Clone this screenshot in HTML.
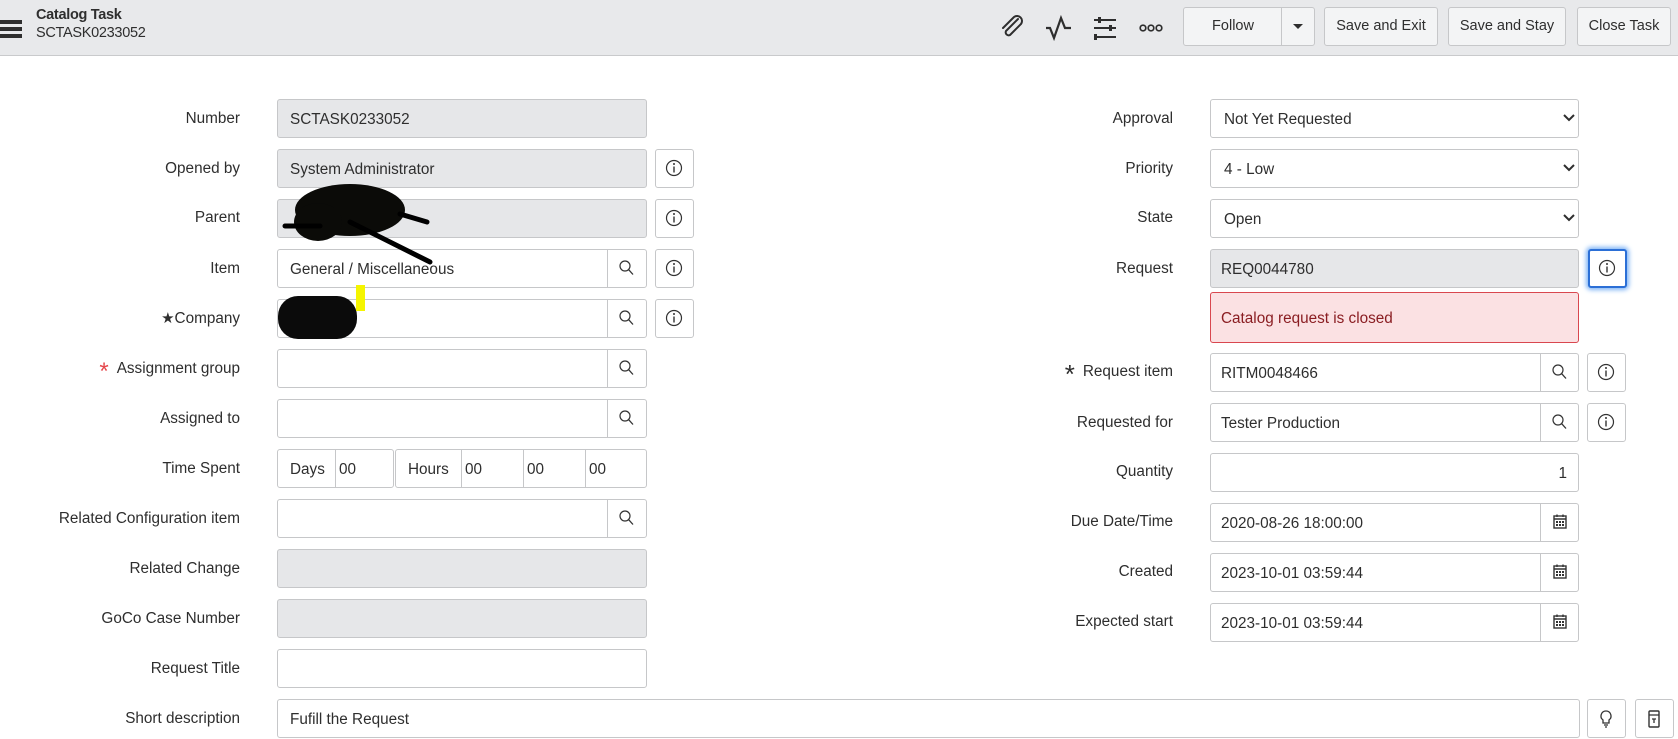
<!DOCTYPE html>
<html><head><meta charset="utf-8">
<style>
*{box-sizing:border-box}
body{margin:0;width:1678px;height:736px;overflow:hidden;background:#fff;font-family:"Liberation Sans",sans-serif;font-size:15.3px;color:#2e2e2e;position:relative}
.hdr{position:absolute;left:0;top:0;width:1678px;height:56px;background:#e8e9eb;border-bottom:1px solid #c9cacc}
.a{position:absolute}
.lbl{position:absolute;text-align:right;line-height:20px;color:#2e2e2e;white-space:nowrap}
.in{position:absolute;height:39px;border:1px solid #c6c7c9;border-radius:3px;background:#fff;line-height:39px;padding-left:12px;white-space:nowrap}
.ro{background:#e6e7e9}
.btn{position:absolute;height:39px;width:39px;border:1px solid #c6c7c9;border-radius:3px;background:#fff}
.hb{position:absolute;top:7px;height:39px;border:1px solid #c6c7c9;border-radius:3px;background:#f3f4f5;line-height:37px;text-align:center;font-size:14.5px;color:#2e2e2e}
.sep{position:absolute;top:0;bottom:0;width:1px;background:#c6c7c9}
svg{position:absolute}
</style></head><body>
<div class="hdr"></div>
<div class="a" style="left:0;top:20px;width:22px;height:4px;background:#2e2e2e"></div>
<div class="a" style="left:0;top:27px;width:22px;height:4px;background:#2e2e2e"></div>
<div class="a" style="left:0;top:34px;width:22px;height:4px;background:#2e2e2e"></div>
<div class="a" style="left:36px;top:7px;font-weight:bold;font-size:14.5px;letter-spacing:-0.3px">Catalog Task</div>
<div class="a" style="left:36px;top:25px;font-size:14.5px;letter-spacing:-0.3px">SCTASK0233052</div>

<svg style="left:998px;top:13px" width="28" height="28" viewBox="0 0 28 28"><path d="M20 6 L8 18 a3 3 0 0 0 4 4 L23 11 a5 5 0 0 0 -7 -7 L5 15" fill="none" stroke="#2e2e2e" stroke-width="2" stroke-linecap="round"/></svg>
<svg style="left:1045px;top:14px" width="28" height="28" viewBox="0 0 28 28"><path d="M1 14 L5 14 L9 24 L16 4 L20 14 L26 14" fill="none" stroke="#2e2e2e" stroke-width="2.2"/></svg>
<svg style="left:1092px;top:15px" width="28" height="28" viewBox="0 0 28 28"><path d="M2 5H24M2 13H24M2 22H24" stroke="#2e2e2e" stroke-width="2"/><rect x="6" y="2" width="3" height="6" fill="#2e2e2e"/><rect x="17" y="10" width="3" height="6" fill="#2e2e2e"/><rect x="2" y="19" width="3" height="6" fill="#2e2e2e"/></svg>
<svg style="left:1138px;top:22px" width="28" height="12" viewBox="0 0 28 12"><circle cx="5" cy="6" r="2.8" fill="none" stroke="#2e2e2e" stroke-width="1.7"/><circle cx="13" cy="6" r="2.8" fill="none" stroke="#2e2e2e" stroke-width="1.7"/><circle cx="21" cy="6" r="2.8" fill="none" stroke="#2e2e2e" stroke-width="1.7"/></svg>

<div class="hb" style="left:1183px;width:132px;"><span style="position:absolute;left:0;width:98px">Follow</span><div class="sep" style="left:97px"></div><svg style="left:108px;top:15px" width="12" height="8"><path d="M1 1L6 6L11 1Z" fill="#2e2e2e"/></svg></div>
<div class="hb" style="left:1324px;width:114px">Save and Exit</div>
<div class="hb" style="left:1448px;width:118px">Save and Stay</div>
<div class="hb" style="left:1577px;width:94px">Close Task</div>

<div class="lbl" style="right:1438px;top:109px">Number</div>
<div class="lbl" style="right:1438px;top:159px">Opened by</div>
<div class="lbl" style="right:1438px;top:208px">Parent</div>
<div class="lbl" style="right:1438px;top:259px">Item</div>
<div class="lbl" style="right:1438px;top:309px"><span style="font-size:15px">★</span>Company</div>
<div class="lbl" style="right:1438px;top:359px"><span style="color:#e5484d;font-size:24px;vertical-align:-6px;margin-right:8px">*</span>Assignment group</div>
<div class="lbl" style="right:1438px;top:409px">Assigned to</div>
<div class="lbl" style="right:1438px;top:459px">Time Spent</div>
<div class="lbl" style="right:1438px;top:509px">Related Configuration item</div>
<div class="lbl" style="right:1438px;top:559px">Related Change</div>
<div class="lbl" style="right:1438px;top:609px">GoCo Case Number</div>
<div class="lbl" style="right:1438px;top:659px">Request Title</div>
<div class="lbl" style="right:1438px;top:709px">Short description</div>

<div class="in ro" style="left:277px;top:99px;width:370px">SCTASK0233052</div>
<div class="in ro" style="left:277px;top:149px;width:370px">System Administrator</div>
<div class="in ro" style="left:277px;top:199px;width:370px"></div>
<div class="in" style="left:277px;top:249px;width:370px">General / Miscellaneous</div>
<div class="in" style="left:277px;top:299px;width:370px"></div>
<div class="in" style="left:277px;top:349px;width:370px"></div>
<div class="in" style="left:277px;top:399px;width:370px"></div>
<div class="in" style="left:277px;top:449px;width:117px;padding-left:12px">Days<div class="sep" style="left:57px"></div><span style="position:absolute;left:61px">00</span></div>
<div class="in" style="left:395px;top:449px;width:252px;padding-left:12px">Hours<div class="sep" style="left:65px"></div><span style="position:absolute;left:69px">00</span><div class="sep" style="left:127px"></div><span style="position:absolute;left:131px">00</span><div class="sep" style="left:189px"></div><span style="position:absolute;left:193px">00</span></div>
<div class="in" style="left:277px;top:499px;width:370px"></div>
<div class="in ro" style="left:277px;top:549px;width:370px"></div>
<div class="in ro" style="left:277px;top:599px;width:370px"></div>
<div class="in" style="left:277px;top:649px;width:370px"></div>
<div class="in" style="left:277px;top:699px;width:1303px">Fufill the Request</div>

<div class="a" style="left:607px;top:249px;width:1px;height:39px;background:#c6c7c9"></div>
<div class="a" style="left:607px;top:299px;width:1px;height:39px;background:#c6c7c9"></div>
<div class="a" style="left:607px;top:349px;width:1px;height:39px;background:#c6c7c9"></div>
<div class="a" style="left:607px;top:399px;width:1px;height:39px;background:#c6c7c9"></div>
<div class="a" style="left:607px;top:499px;width:1px;height:39px;background:#c6c7c9"></div>

<div class="btn" style="left:655px;top:149px"></div>
<div class="btn" style="left:655px;top:199px"></div>
<div class="btn" style="left:655px;top:249px"></div>
<div class="btn" style="left:655px;top:299px"></div>

<div class="lbl" style="right:505px;top:109px">Approval</div>
<div class="lbl" style="right:505px;top:159px">Priority</div>
<div class="lbl" style="right:505px;top:208px">State</div>
<div class="lbl" style="right:505px;top:259px">Request</div>
<div class="lbl" style="right:505px;top:362px"><span style="font-size:26px;vertical-align:-7px;margin-right:8px">*</span>Request item</div>
<div class="lbl" style="right:505px;top:413px">Requested for</div>
<div class="lbl" style="right:505px;top:462px">Quantity</div>
<div class="lbl" style="right:505px;top:512px">Due Date/Time</div>
<div class="lbl" style="right:505px;top:562px">Created</div>
<div class="lbl" style="right:505px;top:612px">Expected start</div>

<div class="in" style="left:1210px;top:99px;width:369px;padding-left:13px">Not Yet Requested</div>
<div class="in" style="left:1210px;top:149px;width:369px;padding-left:13px">4 - Low</div>
<div class="in" style="left:1210px;top:199px;width:369px;padding-left:13px">Open</div>
<div class="in ro" style="left:1210px;top:249px;width:369px;padding-left:10px">REQ0044780</div>
<div class="in" style="left:1210px;top:292px;width:369px;height:51px;line-height:51px;background:#fbe1e3;border-color:#d9474f;color:#8a1d22;padding-left:10px">Catalog request is closed</div>
<div class="in" style="left:1210px;top:353px;width:369px;padding-left:10px">RITM0048466</div>
<div class="in" style="left:1210px;top:403px;width:369px;padding-left:10px">Tester Production</div>
<div class="in" style="left:1210px;top:453px;width:369px;text-align:right;padding-right:11px">1</div>
<div class="in" style="left:1210px;top:503px;width:369px;padding-left:10px">2020-08-26 18:00:00</div>
<div class="in" style="left:1210px;top:553px;width:369px;padding-left:10px">2023-10-01 03:59:44</div>
<div class="in" style="left:1210px;top:603px;width:369px;padding-left:10px">2023-10-01 03:59:44</div>
<div class="a" style="left:1540px;top:353px;width:1px;height:39px;background:#c6c7c9"></div>
<div class="a" style="left:1540px;top:403px;width:1px;height:39px;background:#c6c7c9"></div>
<div class="a" style="left:1540px;top:503px;width:1px;height:39px;background:#c6c7c9"></div>
<div class="a" style="left:1540px;top:553px;width:1px;height:39px;background:#c6c7c9"></div>
<div class="a" style="left:1540px;top:603px;width:1px;height:39px;background:#c6c7c9"></div>

<div class="btn" style="left:1588px;top:249px;border:2px solid #2b6fd6;box-shadow:0 0 5px 2px #7fb4f5"></div>
<div class="btn" style="left:1587px;top:353px"></div>
<div class="btn" style="left:1587px;top:403px"></div>
<div class="btn" style="left:1587px;top:699px"></div>
<div class="btn" style="left:1635px;top:699px"></div>

<svg style="left:1563px;top:113px" width="12" height="10"><path d="M1 2L6 7L11 2" fill="none" stroke="#2e2e2e" stroke-width="2"/></svg>
<svg style="left:1563px;top:163px" width="12" height="10"><path d="M1 2L6 7L11 2" fill="none" stroke="#2e2e2e" stroke-width="2"/></svg>
<svg style="left:1563px;top:213px" width="12" height="10"><path d="M1 2L6 7L11 2" fill="none" stroke="#2e2e2e" stroke-width="2"/></svg>

<svg width="0" height="0"><defs>
<symbol id="s" viewBox="0 0 20 20"><circle cx="8" cy="8" r="5" fill="none" stroke="#333" stroke-width="1.2"/><path d="M11.8 11.8L16 16.5" stroke="#333" stroke-width="1.3"/></symbol>
<symbol id="i" viewBox="0 0 20 20"><circle cx="10" cy="10" r="7.5" fill="none" stroke="#333" stroke-width="1.2"/><circle cx="10" cy="6" r="1" fill="#333"/><path d="M10 8.5V14.5" stroke="#333" stroke-width="1.4"/></symbol>
<symbol id="c" viewBox="0 0 20 20"><rect x="4" y="4" width="12" height="12" fill="none" stroke="#333" stroke-width="1.4"/><path d="M4 7H16M7 2.5V5M13 2.5V5" stroke="#333" stroke-width="1.4"/><g fill="#333"><rect x="6" y="9" width="2" height="2"/><rect x="9" y="9" width="2" height="2"/><rect x="12" y="9" width="2" height="2"/><rect x="6" y="12" width="2" height="2"/><rect x="9" y="12" width="2" height="2"/><rect x="12" y="12" width="2" height="2"/></g></symbol>
</defs></svg>
<svg style="left:617px;top:258px" width="20" height="20"><use href="#s"/></svg>
<svg style="left:617px;top:308px" width="20" height="20"><use href="#s"/></svg>
<svg style="left:617px;top:358px" width="20" height="20"><use href="#s"/></svg>
<svg style="left:617px;top:408px" width="20" height="20"><use href="#s"/></svg>
<svg style="left:617px;top:508px" width="20" height="20"><use href="#s"/></svg>
<svg style="left:1550px;top:362px" width="20" height="20"><use href="#s"/></svg>
<svg style="left:1550px;top:412px" width="20" height="20"><use href="#s"/></svg>
<svg style="left:664px;top:158px" width="20" height="20"><use href="#i"/></svg>
<svg style="left:664px;top:208px" width="20" height="20"><use href="#i"/></svg>
<svg style="left:664px;top:258px" width="20" height="20"><use href="#i"/></svg>
<svg style="left:664px;top:308px" width="20" height="20"><use href="#i"/></svg>
<svg style="left:1597px;top:258px" width="20" height="20"><use href="#i"/></svg>
<svg style="left:1596px;top:362px" width="20" height="20"><use href="#i"/></svg>
<svg style="left:1596px;top:412px" width="20" height="20"><use href="#i"/></svg>
<svg style="left:1550px;top:512px" width="20" height="20"><use href="#c"/></svg>
<svg style="left:1550px;top:562px" width="20" height="20"><use href="#c"/></svg>
<svg style="left:1550px;top:612px" width="20" height="20"><use href="#c"/></svg>
<svg style="left:1596px;top:708px" width="20" height="22" viewBox="0 0 20 22"><path d="M10 3a5 5 0 0 0 -3 9v3h6v-3a5 5 0 0 0 -3 -9z" fill="none" stroke="#333" stroke-width="1.3"/><path d="M8 17h4M9 19h2" stroke="#333" stroke-width="1.2"/></svg>
<svg style="left:1644px;top:708px" width="20" height="22" viewBox="0 0 20 22"><rect x="5" y="3" width="10" height="16" rx="1" fill="none" stroke="#333" stroke-width="1.4"/><path d="M5 7H15M8 11H12M10 11V15" stroke="#333" stroke-width="1.3"/></svg>

<svg style="left:0;top:0" width="700" height="360">
<ellipse cx="350" cy="210" rx="55" ry="26" fill="#0b0b08"/>
<ellipse cx="318" cy="222" rx="24" ry="19" fill="#0b0b08"/>
<path d="M285 226H320" stroke="#000" stroke-width="5" stroke-linecap="round"/>
<path d="M350 222L430 262" stroke="#000" stroke-width="5" stroke-linecap="round"/>
<path d="M400 214L427 222" stroke="#000" stroke-width="5" stroke-linecap="round"/>
<rect x="278" y="296" width="79" height="43" rx="20" fill="#0b0b0b"/>
<rect x="356" y="285" width="9" height="26" fill="#f5f500"/>
</svg>
</body></html>
